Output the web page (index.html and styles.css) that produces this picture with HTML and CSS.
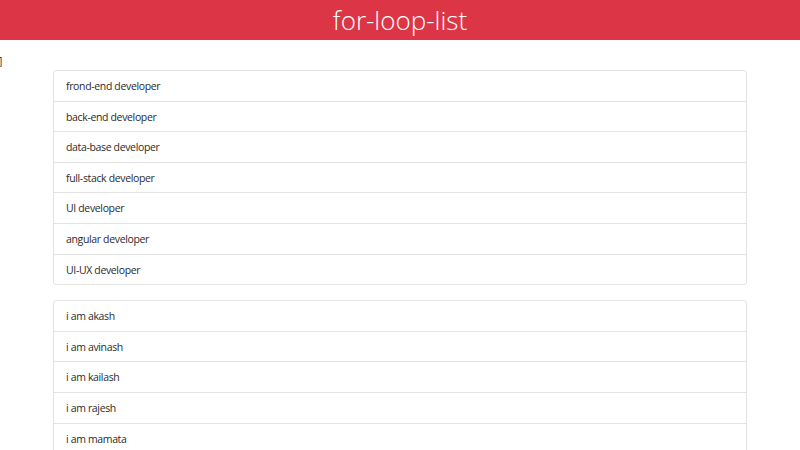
FILE: index.html
```html
<!DOCTYPE html>
<html lang="en">
<head>
    <meta charset="UTF-8">
    <meta name="viewport" content="width=device-width, initial-scale=1.0">
    <title>for-loop-list</title>
    <link rel="stylesheet" href="styles.css">
</head>
<body>
<div class="header">for-loop-list</div>
<div class="stray">]</div>

<div class="content">
    <!-- roles -->
    <ul class="list-group">
        <li class="list-item">frond-end developer</li>
        <li class="list-item">back-end developer</li>
        <li class="list-item">data-base developer</li>
        <li class="list-item">full-stack developer</li>
        <li class="list-item">UI developer</li>
        <li class="list-item">angular developer</li>
        <li class="list-item">UI-UX developer</li>
    </ul>

    <!-- names -->
    <ul class="list-group">
        <li class="list-item">i am akash</li>
        <li class="list-item">i am avinash</li>
        <li class="list-item">i am kailash</li>
        <li class="list-item">i am rajesh</li>
        <li class="list-item">i am mamata</li>
    </ul>
</div>
</body>
</html>
```

FILE: styles.css
```css
body {
    margin: 0;
    font-family: "Open Sans", sans-serif;
    color: #212529;
    background-color: #fff;
}
.header {
    height: 40px;
    line-height: 40px;
    background-color: #dc3545;
    color: #fff;
    text-align: center;
    font-size: 26px;
    font-weight: 300;
}
.stray {
    font-size: 10px;
    line-height: 12px;
    height: 12px;
    margin-top: 15px;
    margin-left: -1px;
}
.content {
    margin: 3px 53px 0;
}
.list-group {
    list-style: none;
    margin: 0 0 15px;
    padding: 0;
    border: 1px solid #e2e2e2;
    border-radius: 3px;
}
.list-item {
    height: 28.6px;
    line-height: 28.6px;
    padding: 1px 12px 0;
    font-size: 10.5px;
    letter-spacing: -0.35px;
    color: #2b2b2b;
    border-bottom: 1px solid #e2e2e2;
}
.list-item:last-child {
    border-bottom: none;
}
```
